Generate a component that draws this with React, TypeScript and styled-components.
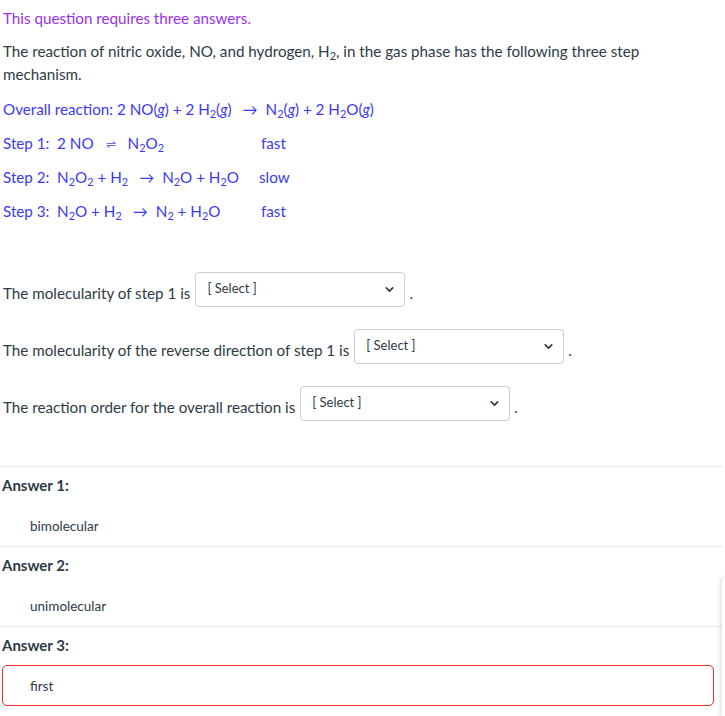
import React from "react";
import styled, { createGlobalStyle } from "styled-components";
import { ChevronDown } from "lucide-react";

const Global = createGlobalStyle`
  html, body { margin: 0; padding: 0; background: #fff; }
  body { font-family: Lato, "Noto Sans", Arial, sans-serif; color: #2d3b45; }
  * { box-sizing: border-box; }
`;

const Page = styled.div`
  position: relative;
  width: 725px;
  min-height: 716px;
  padding: 8px 0 0 0;
  overflow: hidden;
`;

const Content = styled.div`
  padding-left: 3px;
  max-width: 690px;
`;

const P = styled.p<{ $color?: string; $mb?: number }>`
  margin: 0 0 ${(p) => (p.$mb ?? 11)}px 0;
  font-size: 15.2px;
  line-height: 23px;
  color: ${(p) => p.$color || "#2d3b45"};
`;

const Intro = styled(P)`
  line-height: 20px;
  margin-bottom: 12px;
`;

const Sub = styled.sub`
  font-size: 0.72em;
  vertical-align: -0.3em;
  line-height: 0;
`;

const G = styled.i`
  font-style: italic;
`;

const Arrow = styled.span`
  display: inline-block;
  margin: 0 8px 0 11px;
  font-size: 15px;
  line-height: 0;
`;

const Eq = styled.span`
  display: inline-block;
  margin: 0 12px;
  font-size: 12px;
  line-height: 0;
  color: #6a6af0;
  vertical-align: 1px;
`;

const StepGrid = styled.div`
  display: grid;
  grid-template-columns: 254px auto;
  row-gap: 11px;
  font-size: 15.2px;
  line-height: 23px;
  color: #3a3af0;
`;

const Rate = styled.span<{ $x?: number }>`
  padding-left: ${(p) => p.$x ?? 0}px;
`;

const Questions = styled.div`
  margin-top: 49px;
  display: flex;
  flex-direction: column;
  gap: 22px;
`;

const QRow = styled.div`
  display: flex;
  align-items: center;
  font-size: 15.2px;
  line-height: 23px;
`;

const QText = styled.span`
  padding-top: 7px;
  margin-right: 5px;
  white-space: nowrap;
`;

const Select = styled.div`
  flex: none;
  width: 210px;
  height: 35px;
  border: 1px solid #c7cdd1;
  border-radius: 4px;
  background: #fff;
  display: flex;
  align-items: center;
  justify-content: space-between;
  padding: 0 8px 0 11px;
  font-size: 13px;
  color: #2d3b45;
`;

const SelectText = styled.span`
  margin-top: -2px;
`;

const Dot = styled.span`
  padding-top: 7px;
  margin-left: 4px;
`;

const Answers = styled.div`
  margin-top: 45px;
  width: 722px;
`;

const AnswerBlock = styled.div`
  border-top: 1px solid #e6e6e6;
  padding-top: 8px;
  height: 80px;
`;

const AnswerLabel = styled.div`
  font-size: 15px;
  line-height: 20px;
  font-weight: 700;
  color: #2d3b45;
  padding-left: 2px;
  margin-bottom: 10px;
`;

const AnswerValue = styled.div<{ $wrong?: boolean }>`
  height: 41px;
  margin: 0 8px 0 2px;
  border: 1.5px solid ${(p) => (p.$wrong ? "#f0282d" : "transparent")};
  border-radius: 5px;
  display: flex;
  align-items: center;
  padding-left: 27px;
  font-size: 13.5px;
  color: #2d3b45;
`;

const EdgeShadow = styled.div`
  position: absolute;
  right: -6px;
  top: 578px;
  bottom: 0;
  width: 9px;
  background: #fff;
  box-shadow: -2px 0 4px rgba(0, 0, 0, 0.12);
  border-top-left-radius: 4px;
`;

const SelectBox = () => (
  <Select>
    <SelectText>[ Select ]</SelectText>
    <ChevronDown size={13} strokeWidth={3} color="#2d3b45" />
  </Select>
);

export default function App() {
  return (
    <Page>
      <Global />
      <Content>
        <Intro $color="#9b30e8">This question requires three answers.</Intro>
        <P $mb={12}>
          The reaction of nitric oxide, NO, and hydrogen, H<Sub>2</Sub>, in the gas phase has the following three step
          mechanism.
        </P>
        <P $color="#3a3af0" $mb={11}>
          Overall reaction: 2 NO(<G>g</G>) + 2 H<Sub>2</Sub>(<G>g</G>)<Arrow>→</Arrow>N<Sub>2</Sub>(<G>g</G>) + 2 H
          <Sub>2</Sub>O(<G>g</G>)
        </P>
        <StepGrid>
          <span>
            Step 1:&nbsp; 2 NO<Eq>⇌</Eq>N<Sub>2</Sub>O<Sub>2</Sub>
          </span>
          <Rate $x={4}>fast</Rate>
          <span>
            Step 2:&nbsp; N<Sub>2</Sub>O<Sub>2</Sub> + H<Sub>2</Sub>
            <Arrow>→</Arrow>N<Sub>2</Sub>O + H<Sub>2</Sub>O
          </span>
          <Rate $x={2}>slow</Rate>
          <span>
            Step 3:&nbsp; N<Sub>2</Sub>O + H<Sub>2</Sub>
            <Arrow>→</Arrow>N<Sub>2</Sub> + H<Sub>2</Sub>O
          </span>
          <Rate $x={4}>fast</Rate>
        </StepGrid>

        <Questions>
          <QRow>
            <QText>The molecularity of step 1 is</QText>
            <SelectBox />
            <Dot>.</Dot>
          </QRow>
          <QRow>
            <QText>The molecularity of the reverse direction of step 1 is</QText>
            <SelectBox />
            <Dot>.</Dot>
          </QRow>
          <QRow>
            <QText>The reaction order for the overall reaction is</QText>
            <SelectBox />
            <Dot>.</Dot>
          </QRow>
        </Questions>
      </Content>

      <Answers>
        <AnswerBlock>
          <AnswerLabel>Answer 1:</AnswerLabel>
          <AnswerValue>bimolecular</AnswerValue>
        </AnswerBlock>
        <AnswerBlock>
          <AnswerLabel>Answer 2:</AnswerLabel>
          <AnswerValue>unimolecular</AnswerValue>
        </AnswerBlock>
        <AnswerBlock>
          <AnswerLabel>Answer 3:</AnswerLabel>
          <AnswerValue $wrong>first</AnswerValue>
        </AnswerBlock>
      </Answers>
      <EdgeShadow />
    </Page>
  );
}
